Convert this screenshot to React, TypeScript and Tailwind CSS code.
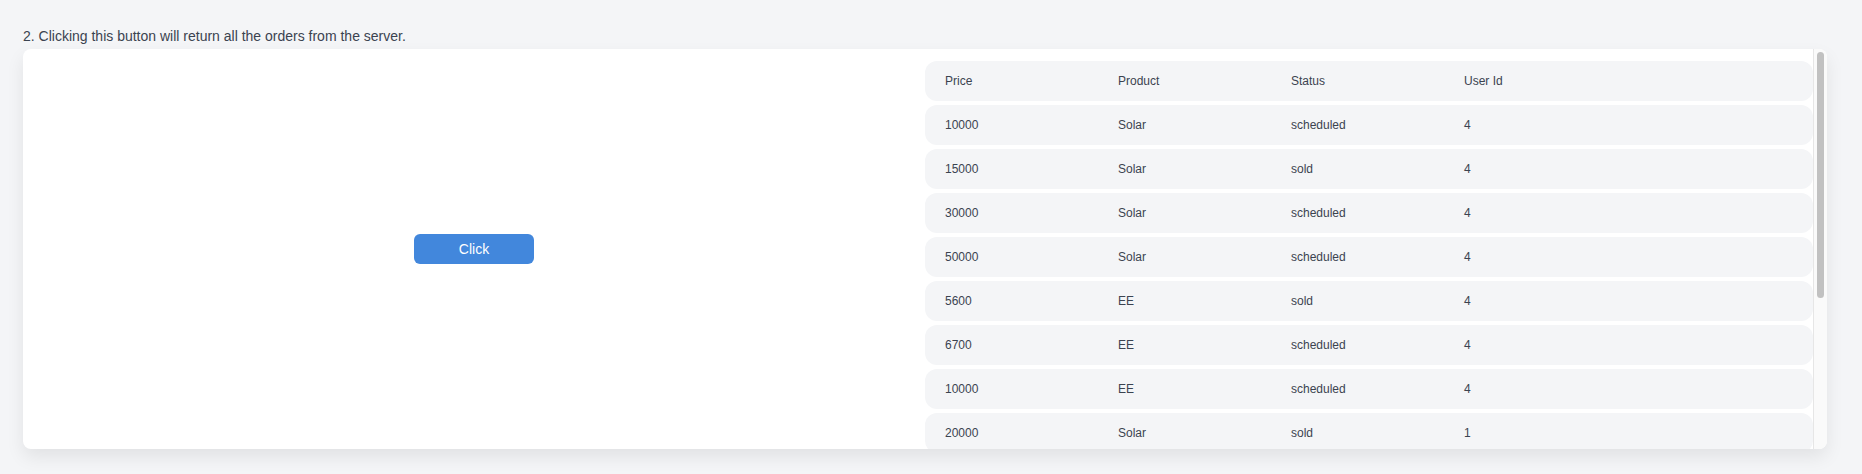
import React from 'react';

type Order = { price: number; product: string; status: string; userId: number };

const orders: Order[] = [
  { price: 10000, product: 'Solar', status: 'scheduled', userId: 4 },
  { price: 15000, product: 'Solar', status: 'sold', userId: 4 },
  { price: 30000, product: 'Solar', status: 'scheduled', userId: 4 },
  { price: 50000, product: 'Solar', status: 'scheduled', userId: 4 },
  { price: 5600, product: 'EE', status: 'sold', userId: 4 },
  { price: 6700, product: 'EE', status: 'scheduled', userId: 4 },
  { price: 10000, product: 'EE', status: 'scheduled', userId: 4 },
  { price: 20000, product: 'Solar', status: 'sold', userId: 1 },
  { price: 12000, product: 'EE', status: 'sold', userId: 1 },
  { price: 8000, product: 'Solar', status: 'scheduled', userId: 2 },
  { price: 25000, product: 'Solar', status: 'sold', userId: 2 },
  { price: 4300, product: 'EE', status: 'scheduled', userId: 3 },
  { price: 18000, product: 'Solar', status: 'scheduled', userId: 3 },
];

const rowClass =
  'grid grid-cols-[173px_173px_173px_1fr] items-center h-10 shrink-0 pl-5 rounded-xl bg-[#f4f5f7] text-[12px] text-[#3b4350]';

const App: React.FC = () => {
  return (
    <div className="min-h-screen bg-[#f4f5f7] pl-[23px] pr-[35px] pt-[26px] font-['Liberation_Sans',Arial,sans-serif]">
      <p className="text-[14px] leading-5 text-[#3b4350] mb-[3px]">
        2. Clicking this button will return all the orders from the server.
      </p>

      {/* Card: action on the left, results on the right */}
      <div className="grid grid-cols-2 h-[400px] bg-white rounded-lg shadow-[0_8px_18px_rgba(0,0,0,0.08)] overflow-hidden">
        <div className="flex items-center justify-center">
          <button className="w-[120px] h-[30px] rounded-md bg-[#4287dc] text-white text-[14px] leading-none">
            Click
          </button>
        </div>

        <div className="flex min-h-0">
          <div className="flex-1 min-w-0 flex flex-col gap-1 overflow-hidden py-3">
            <div className={rowClass}>
              <span>Price</span>
              <span>Product</span>
              <span>Status</span>
              <span>User Id</span>
            </div>
            {orders.map((o, i) => (
              <div key={i} className={rowClass}>
                <span>{o.price}</span>
                <span>{o.product}</span>
                <span>{o.status}</span>
                <span>{o.userId}</span>
              </div>
            ))}
          </div>

          {/* scrollbar */}
          <div className="w-[14px] shrink-0 bg-[#fafafa] border-l border-[#e6e6e6] px-[3px] pt-[3px]">
            <div className="h-[246px] rounded-full bg-[#c1c1c1]" />
          </div>
        </div>
      </div>
    </div>
  );
};

export default App;
